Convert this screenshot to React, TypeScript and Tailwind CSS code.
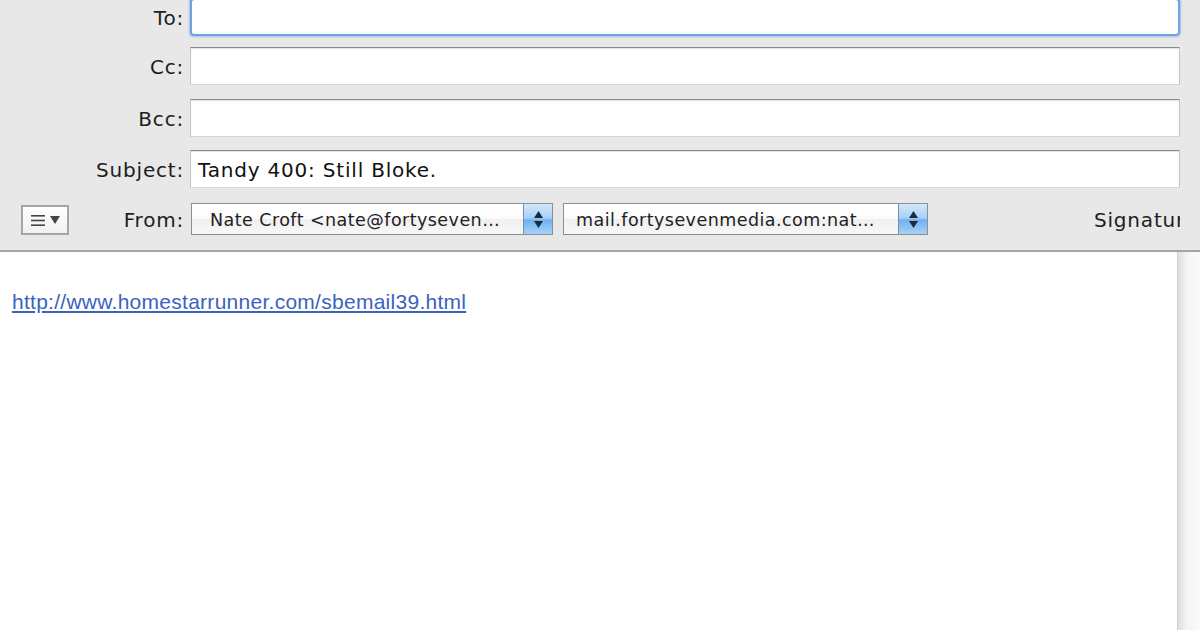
const fieldBase =
  "h-[38px] flex-1 bg-white border border-[#c4c4c4] border-t-[#8a8a8a] border-b-[#d6d6d6] shadow-[inset_0_1px_1px_rgba(0,0,0,0.12)]";

const Label = ({ text }: { text: string }) => (
  <div className="w-[184px] shrink-0 text-right text-[20px] tracking-[0.8px] text-[#1e1e1e] pt-[2px]">
    {text}
  </div>
);

const PopupArrows = () => (
  <div className="w-[29px] h-full shrink-0 border-l border-[#7d8ea3] bg-[linear-gradient(to_bottom,#d3e8fc_0%,#a9d1f7_45%,#6fb2f2_55%,#a6d2f8_100%)] flex flex-col items-center justify-center gap-[3px]">
    <svg width="9" height="7" viewBox="0 0 9 7">
      <path d="M4.5 0L9 7H0z" fill="#1d2a3a" />
    </svg>
    <svg width="9" height="7" viewBox="0 0 9 7">
      <path d="M0 0h9L4.5 7z" fill="#1d2a3a" />
    </svg>
  </div>
);

const Popup = ({ text, width, pad }: { text: string; width: string; pad: string }) => (
  <div
    className={`${width} h-[32px] shrink-0 flex border border-[#8e8e8e] bg-[linear-gradient(to_bottom,#ffffff_0%,#fbfbfb_50%,#f0f0f0_51%,#f7f7f7_100%)]`}
  >
    <div className={`flex-1 flex items-center pt-[2px] ${pad} text-[17.5px] tracking-[0.45px] text-[#222] whitespace-nowrap overflow-hidden`}>
      {text}
    </div>
    <PopupArrows />
  </div>
);

const App = () => {
  return (
    <div
      className="w-[1200px] h-[630px] overflow-hidden bg-white flex flex-col"
      style={{ fontFamily: '"DejaVu Sans", "Liberation Sans", sans-serif' }}
    >
      <div className="h-[252px] shrink-0 bg-[#e8e8e8] border-b-2 border-[#a2a6ab] pr-[20px] flex flex-col overflow-hidden">
        <div className="flex items-center gap-[6px] -mt-[2px]">
          <Label text="To:" />
          <div className="h-[38px] flex-1 bg-white border-[2px] border-[#6ea2dc] rounded-[4px] shadow-[0_0_2px_1px_rgba(110,162,220,0.55)]" />
        </div>
        <div className="flex items-center gap-[6px] mt-[11px]">
          <Label text="Cc:" />
          <div className={fieldBase} />
        </div>
        <div className="flex items-center gap-[6px] mt-[14px]">
          <Label text="Bcc:" />
          <div className={fieldBase} />
        </div>
        <div className="flex items-center gap-[6px] mt-[13px]">
          <Label text="Subject:" />
          <div className={`${fieldBase} flex items-center pl-[7px] pt-[2px] text-[20px] tracking-[0.8px] text-[#111]`}>
            Tandy 400: Still Bloke.
          </div>
        </div>
        <div className="flex items-center mt-[15px] h-[32px] overflow-hidden">
          <div className="w-[184px] shrink-0 flex items-center justify-between pl-[21px]">
            <div className="w-[48px] h-[30px] mt-[2px] border-[2px] border-[#a5a5a5] bg-[linear-gradient(to_bottom,#ffffff,#f1f1f1)] flex items-center justify-center gap-[5px]">
              <svg width="14" height="11" viewBox="0 0 14 11">
                <rect x="0" y="0" width="14" height="1.6" fill="#444" />
                <rect x="0" y="4.7" width="14" height="1.6" fill="#444" />
                <rect x="0" y="9.4" width="14" height="1.6" fill="#444" />
              </svg>
              <svg width="10" height="8" viewBox="0 0 10 8">
                <path d="M0 0h10L5 8z" fill="#444" />
              </svg>
            </div>
            <span className="text-[20px] tracking-[0.8px] text-[#1e1e1e] pt-[2px]">From:</span>
          </div>
          <div className="w-[7px] shrink-0" />
          <Popup text="Nate Croft <nate@fortyseven…" width="w-[362px]" pad="pl-[18px]" />
          <div className="w-[10px] shrink-0" />
          <Popup text="mail.fortysevenmedia.com:nat…" width="w-[365px]" pad="pl-[12px]" />
          <div className="w-[166px] shrink-0" />
          <span className="shrink-0 whitespace-nowrap text-[20px] tracking-[0.8px] text-[#1e1e1e] pt-[2px]">
            Signature:
          </span>
        </div>
      </div>
      <div className="flex-1 flex">
        <div className="flex-1 pl-[12px] pt-[38px]">
          <a
            href="#"
            className="text-[21px] leading-[24px] tracking-[0.27px] text-[#3a63c0] underline underline-offset-[2px]"
            style={{ fontFamily: '"Liberation Sans", Arial, sans-serif' }}
          >
            http://www.homestarrunner.com/sbemail39.html
          </a>
        </div>
        <div className="w-[23px] shrink-0 border-l border-[#cfcfcf] bg-[linear-gradient(to_right,#dedede,#f4f4f4_40%,#fbfbfb)]" />
      </div>
    </div>
  );
};

export default App;
